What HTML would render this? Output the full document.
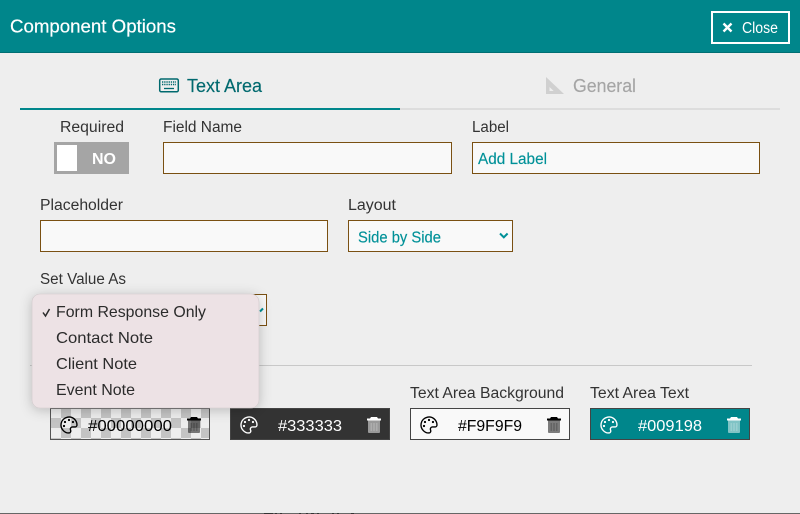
<!DOCTYPE html>
<html><head><meta charset="utf-8"><style>
html,body{margin:0;padding:0;background:#eee;width:800px;height:514px;overflow:hidden}
svg{display:block}
text{font-family:"Liberation Sans",sans-serif}
</style></head><body>
<svg width="800" height="514" viewBox="0 0 800 514" xmlns="http://www.w3.org/2000/svg">
<defs>
<filter id="sh" x="-20%" y="-20%" width="140%" height="150%"><feDropShadow dx="0" dy="2" stdDeviation="6" flood-color="#000" flood-opacity=".22"/></filter>
<pattern id="ck" x="51" y="408" width="20" height="20" patternUnits="userSpaceOnUse"><rect width="20" height="20" fill="#eee"/><rect x="10" width="10" height="10" fill="#c4c4c4"/><rect y="10" width="10" height="10" fill="#c4c4c4"/></pattern>
<g id="pal"><g transform="scale(.0312)"><path d="M204.3 5C104.9 24.4 24.8 104.3 5.2 203.4c-37 187 131.7 326.4 258.8 306.7 41.2-6.4 61.4-54.6 42.5-91.7-23.1-45.4 9.9-98.4 60.9-98.4h79.7c35.8 0 64.8-29.6 64.9-65.3C511.5 97.1 368.1-26.9 204.3 5z" fill="none" stroke="currentColor" stroke-width="44"/><circle cx="96" cy="288" r="36" fill="currentColor"/><circle cx="128" cy="160" r="36" fill="currentColor"/><circle cx="256" cy="96" r="36" fill="currentColor"/><circle cx="384" cy="160" r="36" fill="currentColor"/></g></g>
<g id="tr"><path d="M4 0h6l1 1.500h3V3.500H0V1.500h3z" fill="currentColor"/><path d="M1 3.500h12V15a1 1 0 0 1-1 1H2a1 1 0 0 1-1-1z" fill="currentColor" opacity=".5"/><path d="M3.500 6h1.600v8H3.500zM6.200 6h1.600v8H6.200zM8.900 6h1.600v8H8.900z" fill="currentColor" opacity=".2"/></g>
</defs>

<rect width="800" height="514" fill="#eee"/>
<rect width="800" height="52" fill="#00868b"/>
<rect y="52" width="800" height="1" fill="#006f73"/>
<text x="10" y="32.500" font-size="18.500" fill="#fff" stroke="#fff" stroke-width=".2" textLength="166" lengthAdjust="spacingAndGlyphs">Component Options</text>
<rect x="712" y="12" width="77" height="31" fill="none" stroke="#fff" stroke-width="2"/>
<path d="M723.500 23.500l8 8m0-8l-8 8" stroke="#fff" stroke-width="2.400" fill="none"/>
<text x="742" y="33" font-size="15.500" fill="#fff" textLength="36" lengthAdjust="spacingAndGlyphs">Close</text>

<rect x="159.700" y="79" width="18.600" height="12.800" rx="1.500" fill="none" stroke="#00696e" stroke-width="1.500"/>
<path d="M162 82h14M162 84.500h14" stroke="#00696e" stroke-width="1.500" stroke-dasharray="1.300 .9" fill="none"/>
<path d="M164 88.500h10" stroke="#00696e" stroke-width="1.300"/>
<text x="187" y="92" font-size="18.500" fill="#00696e" stroke="#00696e" stroke-width=".15" textLength="75" lengthAdjust="spacingAndGlyphs">Text Area</text>
<rect x="20" y="108" width="380" height="2" fill="#00868b"/>
<rect x="400" y="108" width="380" height="2" fill="#ddd"/>
<path fill-rule="evenodd" d="M546 77l18 17h-18zM549.500 87v4h4.200z" fill="#d0d0d0"/>
<text x="573" y="92" font-size="18.500" fill="#a5a5a5" stroke="#a5a5a5" stroke-width=".15" textLength="63" lengthAdjust="spacingAndGlyphs">General</text>

<g font-size="15.500" fill="#333">
<text x="60" y="132" textLength="64" lengthAdjust="spacingAndGlyphs">Required</text>
<text x="163" y="132" textLength="79" lengthAdjust="spacingAndGlyphs">Field Name</text>
<text x="472" y="132" textLength="37" lengthAdjust="spacingAndGlyphs">Label</text>
<text x="40" y="210" textLength="83" lengthAdjust="spacingAndGlyphs">Placeholder</text>
<text x="348" y="210" textLength="48" lengthAdjust="spacingAndGlyphs">Layout</text>
<text x="40" y="284" textLength="86" lengthAdjust="spacingAndGlyphs">Set Value As</text>
<text x="410" y="398" textLength="154" lengthAdjust="spacingAndGlyphs">Text Area Background</text>
<text x="590" y="398" textLength="99" lengthAdjust="spacingAndGlyphs">Text Area Text</text>
</g>

<rect x="54" y="142" width="75" height="32" fill="#a5a5a5"/>
<rect x="57" y="145" width="20" height="26" fill="#fff"/>
<text x="92" y="164" font-size="16" font-weight="700" fill="#fff" textLength="24" lengthAdjust="spacingAndGlyphs">NO</text>

<g fill="#f9f9f9" stroke="#7a5012" stroke-width="1">
<rect x="163.500" y="142.500" width="288" height="31"/>
<rect x="472.500" y="142.500" width="287" height="31"/>
<rect x="40.500" y="220.500" width="287" height="31"/>
<rect x="348.500" y="220.500" width="164" height="31"/>
<rect x="40.500" y="294.500" width="226" height="31"/>
</g>
<g font-size="15.500" fill="#009198" stroke="#009198" stroke-width=".15">
<text x="478" y="164" textLength="69" lengthAdjust="spacingAndGlyphs">Add Label</text>
<text x="358" y="242.500" textLength="83" lengthAdjust="spacingAndGlyphs">Side by Side</text>
</g>
<path d="M500 233.500l3.800 3.800 3.800-3.800" fill="none" stroke="#009198" stroke-width="2"/>
<path d="M260 311.500l3-3" fill="none" stroke="#009198" stroke-width="2"/>

<rect x="30" y="365" width="722" height="1" fill="#c8c8c8"/>

<rect x="50.500" y="408.500" width="159" height="31" fill="url(#ck)" stroke="#555"/>
<rect x="230.500" y="408.500" width="159" height="31" fill="#333" stroke="#444"/>
<rect x="410.500" y="408.500" width="159" height="31" fill="#f9f9f9" stroke="#444"/>
<rect x="590.500" y="408.500" width="159" height="31" fill="#00868b" stroke="#444"/>

<use href="#pal" x="61" y="417" color="#000"/>
<use href="#pal" x="241" y="417" color="#fff"/>
<use href="#pal" x="421" y="417" color="#000"/>
<use href="#pal" x="601" y="417" color="#fff"/>
<use href="#tr" x="187" y="417" color="#000"/>
<use href="#tr" x="367" y="417" color="#fff"/>
<use href="#tr" x="547" y="417" color="#000"/>
<use href="#tr" x="727" y="417" color="#fff"/>
<g font-size="16">
<text x="88" y="431" fill="#000" textLength="84" lengthAdjust="spacingAndGlyphs">#00000000</text>
<text x="278" y="431" fill="#fff" textLength="64" lengthAdjust="spacingAndGlyphs">#333333</text>
<text x="458" y="431" fill="#000" textLength="64" lengthAdjust="spacingAndGlyphs">#F9F9F9</text>
<text x="638" y="431" fill="#fff" textLength="64" lengthAdjust="spacingAndGlyphs">#009198</text>
</g>

<rect x="32" y="294" width="227" height="114" rx="8" fill="#ede2e5" stroke="#cfc8ca" stroke-width=".6" filter="url(#sh)"/>
<path d="M43 312.500l2.500 3.500 4-7" fill="none" stroke="#2b2b2b" stroke-width="1.500"/>
<g font-size="16" fill="#2b2b2b">
<text x="56" y="317" textLength="150" lengthAdjust="spacingAndGlyphs">Form Response Only</text>
<text x="56" y="343" textLength="97" lengthAdjust="spacingAndGlyphs">Contact Note</text>
<text x="56" y="369" textLength="81" lengthAdjust="spacingAndGlyphs">Client Note</text>
<text x="56" y="395" textLength="79" lengthAdjust="spacingAndGlyphs">Event Note</text>
</g>

<rect y="513" width="800" height="1" fill="#666"/>
<rect x="264" y="513" width="9" height="1" fill="#333"/>
<path d="M275 513.500h2m3 0h2m17 0h2m5 0h2m3 0h3m3 0h2m13 0h2m3 0h2m12 0h3" stroke="#333" stroke-width="1"/>
</svg>
</body></html>
